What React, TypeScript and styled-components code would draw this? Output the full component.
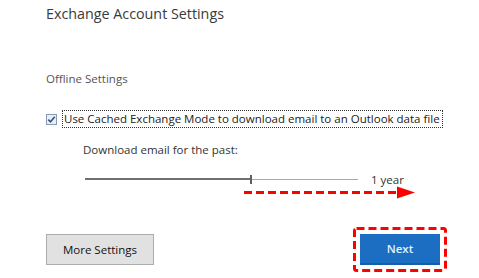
import React from "react";
import styled, { createGlobalStyle } from "styled-components";

const Global = createGlobalStyle`
  html, body { margin: 0; padding: 0; background: #ffffff; }
  body { width: 479px; height: 278px; overflow: hidden; font-family: "Open Sans", "Noto Sans", sans-serif; }
`;

const Page = styled.div`
  position: relative;
  width: 479px;
  height: 278px;
  box-sizing: border-box;
  padding: 4px 0 0 46px;
  display: flex;
  flex-direction: column;
`;

const Title = styled.h1`
  margin: 0;
  font-weight: 400;
  font-size: 14.3px;
  line-height: 20px;
  color: #3a3a3a;
`;

const Section = styled.div`
  margin-top: 47px;
  font-size: 11.5px;
  line-height: 16px;
  color: #555;
`;

const CheckRow = styled.div`
  margin-top: 23px;
  display: flex;
  align-items: center;
  gap: 5px;
`;

const Box = styled.span`
  width: 11px;
  height: 11px;
  box-sizing: border-box;
  border: 1px solid #8a9cb3;
  background: #e6eef8;
  display: flex;
  align-items: center;
  justify-content: center;
`;

const CheckLabel = styled.span`
  font-size: 11.5px;
  line-height: 16px;
  color: #222;
  padding: 0 2px 0 1px;
  border: 1px dotted #333;
`;

const SubLabel = styled.div`
  margin: 14px 0 0 37px;
  font-size: 11.5px;
  line-height: 16px;
  color: #333;
`;

const SliderRow = styled.div`
  margin: 13px 0 0 39px;
  display: flex;
  align-items: center;
  height: 16px;
`;

const Filled = styled.div`
  width: 165px;
  height: 2px;
  background: #707070;
`;

const Thumb = styled.div`
  width: 2px;
  height: 9px;
  background: #606060;
`;

const Rest = styled.div`
  width: 106px;
  height: 1px;
  background: #a8a8a8;
`;

const Value = styled.span`
  margin-left: 13px;
  font-size: 11.5px;
  color: #333;
`;

const Buttons = styled.div`
  margin-top: auto;
  margin-bottom: 6px;
  display: flex;
  align-items: center;
  width: 394px;
  justify-content: space-between;
`;

const GrayButton = styled.button`
  width: 108px;
  height: 31px;
  box-sizing: border-box;
  background: #e1e1e1;
  border: 1px solid #adadad;
  font-family: inherit;
  font-size: 11.5px;
  color: #111;
  padding: 0;
`;

const Highlight = styled.div`
  position: relative;
  padding: 7px;
  margin-right: -7px;
`;

const BlueButton = styled.button`
  display: block;
  width: 80px;
  height: 31px;
  box-sizing: border-box;
  background: #1b6ec2;
  border: none;
  border-bottom: 2px solid #175ea8;
  font-family: inherit;
  font-weight: 600;
  font-size: 11.5px;
  color: #e4f1ff;
  padding: 0;
`;

const Overlay = styled.svg`
  position: absolute;
  left: 0;
  top: 0;
  pointer-events: none;
`;

export default function App() {
  return (
    <>
      <Global />
      <Page>
        <Title>Exchange Account Settings</Title>
        <Section>Offline Settings</Section>
        <CheckRow>
          <Box>
            <svg width="9" height="9" viewBox="0 0 9 9">
              <path d="M1.3 4.6 L3.5 6.8 L7.8 1.8" stroke="#34557e" strokeWidth="1.6" fill="none" />
            </svg>
          </Box>
          <CheckLabel>Use Cached Exchange Mode to download email to an Outlook data file</CheckLabel>
        </CheckRow>
        <SubLabel>Download email for the past:</SubLabel>
        <SliderRow>
          <Filled />
          <Thumb />
          <Rest />
          <Value>1 year</Value>
        </SliderRow>
        <Buttons>
          <GrayButton>More Settings</GrayButton>
          <Highlight>
            <BlueButton>Next</BlueButton>
            <Overlay width="94" height="45" viewBox="0 0 94 45">
              <rect x="1.5" y="1.5" width="91" height="42" rx="2" fill="none" stroke="#ff0000" strokeWidth="3" strokeDasharray="8 4" />
            </Overlay>
          </Highlight>
        </Buttons>
        <Overlay width="479" height="278" viewBox="0 0 479 278">
          <line x1="244" y1="192.5" x2="399" y2="192.5" stroke="#ff0000" strokeWidth="3" strokeDasharray="8 4" />
          <polygon points="397,186.5 415,192.5 397,198.5" fill="#ff0000" />
        </Overlay>
      </Page>
    </>
  );
}
